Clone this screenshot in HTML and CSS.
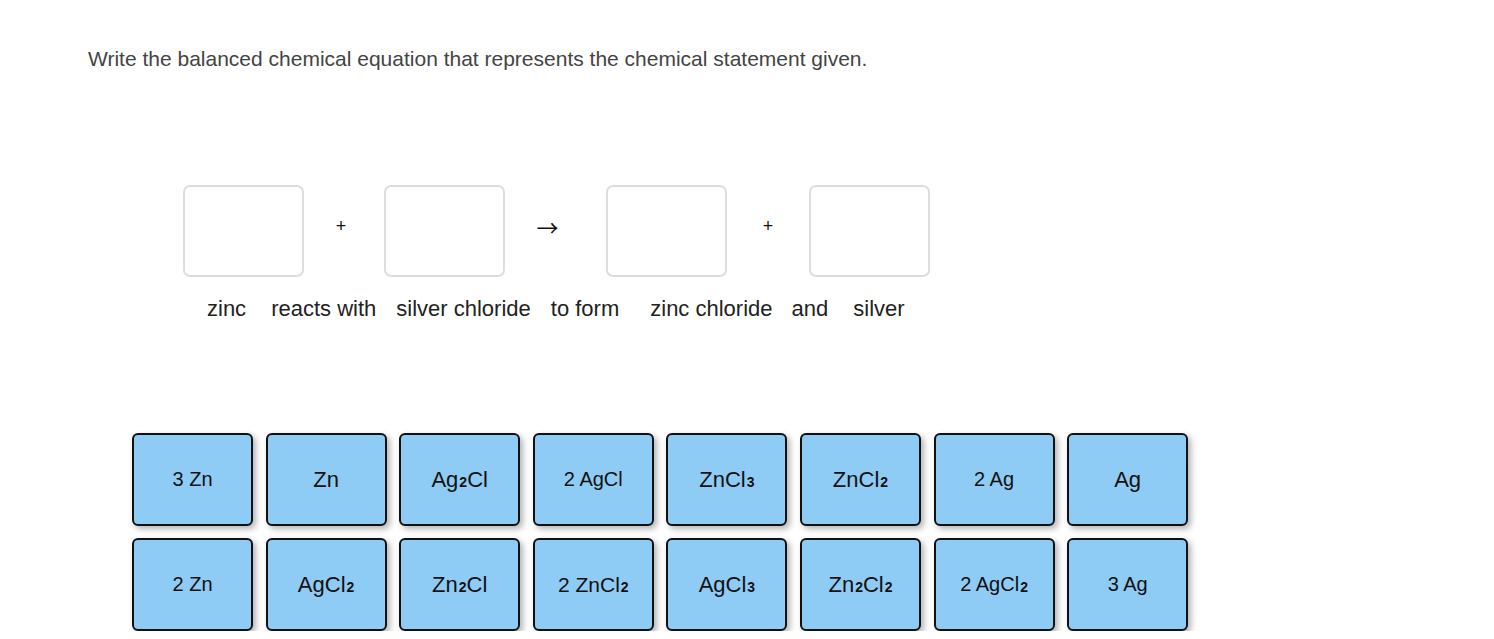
FILE: index.html
```html
<!DOCTYPE html>
<html lang="en">
<head>
  <meta charset="UTF-8" />
  <title>Balanced chemical equation</title>
  <link rel="stylesheet" href="styles.css">
</head>
<body>

  <!-- question prompt -->
  <p class="prompt">Write the balanced chemical equation that represents the chemical statement given.</p>

  <!-- drop targets -->
  <div class="equation">
    <div class="slot"></div>
    <span class="op plus1">+</span>
    <div class="slot"></div>
    <span class="op arrow">→</span>
    <div class="slot"></div>
    <span class="op plus2">+</span>
    <div class="slot"></div>
  </div>

  <div class="statement">
    <span class="word w-zinc">zinc</span>
    <span class="word w-reacts">reacts with</span>
    <span class="word w-agcl">silver chloride</span>
    <span class="word w-form">to form</span>
    <span class="word w-zncl">zinc chloride</span>
    <span class="word w-and">and</span>
    <span class="word w-ag">silver</span>
  </div>

  <!-- answer tiles -->
  <div class="tiles">
    <div class="tile">3 Zn</div>
    <div class="tile big">Zn</div>
    <div class="tile big">Ag<span class="sub">2</span>Cl</div>
    <div class="tile">2 AgCl</div>
    <div class="tile big">ZnCl<span class="sub">3</span></div>
    <div class="tile big">ZnCl<span class="sub">2</span></div>
    <div class="tile">2 Ag</div>
    <div class="tile big">Ag</div>
    <div class="tile">2 Zn</div>
    <div class="tile big">AgCl<span class="sub">2</span></div>
    <div class="tile big">Zn<span class="sub">2</span>Cl</div>
    <div class="tile mid">2 ZnCl<span class="sub">2</span></div>
    <div class="tile big">AgCl<span class="sub">3</span></div>
    <div class="tile big">Zn<span class="sub">2</span>Cl<span class="sub">2</span></div>
    <div class="tile">2 AgCl<span class="sub">2</span></div>
    <div class="tile">3 Ag</div>
  </div>

</body>
</html>
```

FILE: styles.css
```css
body {
  margin: 0;
  background: #fff;
  font-family: 'Liberation Sans', Arial, sans-serif;
  color: #222;
}

.prompt {
  margin: 0;
  padding: 47px 0 0 88px;
  font-size: 21px;
  line-height: 24px;
  color: #444;
}

.equation {
  display: flex;
  align-items: center;
  margin: 114px 0 0 183px;
}

.slot {
  width: 117px;
  height: 88px;
  border: 2px solid #ddd;
  border-radius: 7px;
  background: #fff;
}

.op {
  text-align: center;
  font-size: 18px;
  margin-top: -10px;
  color: #111;
}

.plus1 {
  width: 74px;
  margin-right: 6px;
}

.arrow {
  width: 85px;
  margin-right: 16px;
  font-family: 'Noto Sans CJK JP', sans-serif;
  font-size: 22px;
  line-height: 24px;
}

.plus2 {
  width: 82px;
}

.statement {
  display: flex;
  margin: 20px 0 0 207px;
  font-size: 22px;
  line-height: 24px;
}

.w-reacts { margin-left: 25px; }
.w-agcl { margin-left: 20px; }
.w-form { margin-left: 20px; }
.w-zncl { margin-left: 31px; }
.w-and { margin-left: 19px; }
.w-ag { margin-left: 25px; }

.tiles {
  display: grid;
  grid-template-columns: repeat(8, 121px);
  grid-auto-rows: 93px;
  column-gap: 12.6px;
  row-gap: 12px;
  margin: 112px 0 0 132px;
}

.tile {
  display: flex;
  align-items: center;
  justify-content: center;
  background: #8ecbf5;
  border: 2px solid #111;
  border-radius: 6px;
  box-shadow: 3px 3px 6px rgba(0, 0, 0, 0.3);
  font-size: 20px;
  color: #111;
}

.tile.big {
  font-size: 22px;
}

.tile.mid {
  font-size: 21px;
}

/* subscript digits sit on the baseline, squat and heavy */
.sub {
  font-size: 14px;
  font-weight: 700;
  margin-left: 1px;
  position: relative;
  top: 2px;
}
```
